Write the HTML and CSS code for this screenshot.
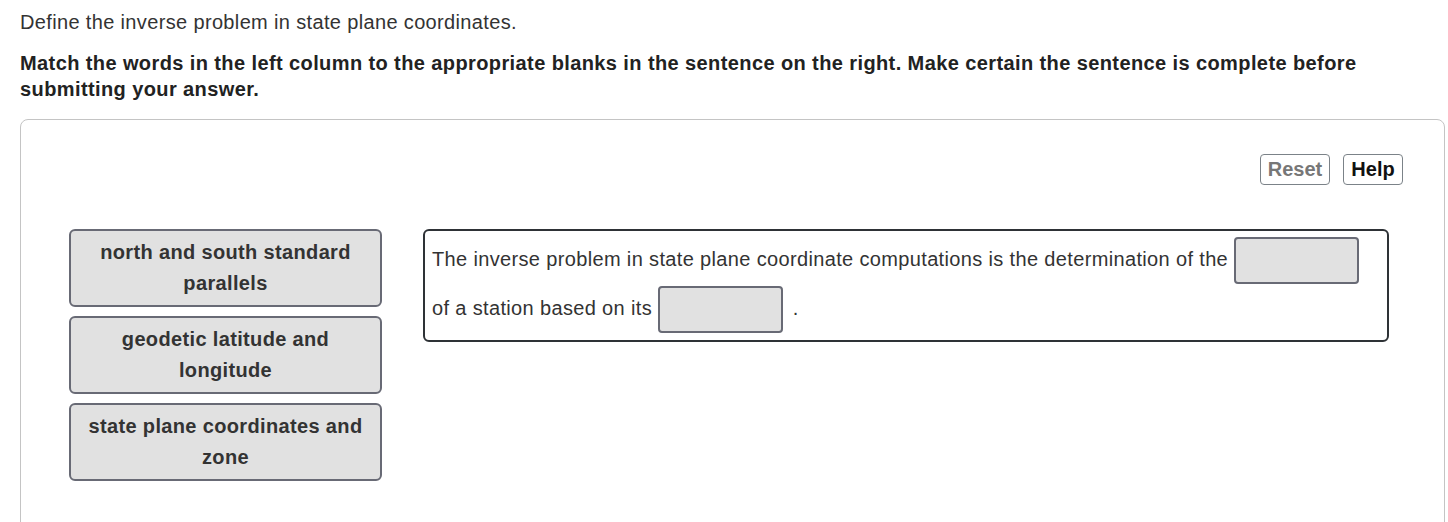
FILE: index.html
```html
<!DOCTYPE html>
<html lang="en">
<head>
    <meta charset="UTF-8">
    <title>Define the inverse problem</title>
    <link rel="stylesheet" href="styles.css">
</head>
<body>

<p class="question">Define the inverse problem in state plane coordinates.</p>
<p class="instructions">Match the words in the left column to the appropriate blanks in the sentence on the right. Make certain the sentence is complete before submitting your answer.</p>

<div class="activity">
    <div class="toolbar">
        <button class="tool-btn reset-btn">Reset</button>
        <button class="tool-btn help-btn">Help</button>
    </div>

    <div class="match-area">
        <div class="word-bank">
            <div class="word">north and south standard parallels</div>
            <div class="word">geodetic latitude and longitude</div>
            <div class="word">state plane coordinates and zone</div>
        </div>

        <div class="sentence">
            The inverse problem in state plane coordinate computations is the determination of the
            <span class="blank"></span>
            of a station based on its
            <span class="blank"></span>
            <span class="period">.</span>
        </div>
    </div>
</div>

</body>
</html>
```

FILE: styles.css
```css
body {
    margin: 0;
    padding: 9px 0 0 20px;
    font-family: "Liberation Sans", Arial, sans-serif;
    color: #333;
    background-color: #fff;
}
.question {
    margin: 0;
    font-size: 20px;
    letter-spacing: 0.35px;
    line-height: 26px;
}
.instructions {
    margin: 15px 0 0 0;
    font-size: 20px;
    font-weight: bold;
    letter-spacing: 0.4px;
    line-height: 26px;
    color: #222;
    padding-right: 20px;
}
.activity {
    margin-top: 17px;
    width: 1425px;
    height: 460px;
    box-sizing: border-box;
    border: 1px solid #c4c4c4;
    border-radius: 8px;
    padding: 34px 41px 0 48px;
}
.toolbar {
    display: flex;
    justify-content: flex-end;
    gap: 13px;
}
.tool-btn {
    font-family: "Liberation Sans", Arial, sans-serif;
    font-size: 20px;
    font-weight: bold;
    background-color: #fff;
    border: 1px solid #7b8288;
    border-radius: 4px;
    height: 31px;
    padding: 0 6px;
    cursor: pointer;
}
.reset-btn {
    color: #777;
    width: 70px;
}
.help-btn {
    color: #111;
    width: 60px;
}
.match-area {
    display: flex;
    align-items: flex-start;
    gap: 41px;
    margin-top: 44px;
}
.word-bank {
    display: flex;
    flex-direction: column;
    gap: 9px;
    width: 313px;
    flex-shrink: 0;
}
.word {
    box-sizing: border-box;
    height: 78px;
    padding: 6px 14px;
    background-color: #e1e1e1;
    border: 2px solid #686a75;
    border-radius: 6px;
    font-size: 20px;
    font-weight: bold;
    letter-spacing: 0.35px;
    line-height: 31px;
    text-align: center;
    color: #333;
}
.sentence {
    flex: 1;
    margin-right: 14px;
    box-sizing: border-box;
    border: 2px solid #2e3236;
    border-radius: 6px;
    padding: 4px 6px 7px 7px;
    font-size: 20px;
    letter-spacing: 0.35px;
    line-height: 48px;
    color: #333;
}
.blank {
    display: inline-block;
    box-sizing: border-box;
    width: 125px;
    height: 47px;
    vertical-align: middle;
    background-color: #e1e1e1;
    border: 2px solid #686a75;
    border-radius: 4px;
}
.period {
    margin-left: 4px;
}
```
